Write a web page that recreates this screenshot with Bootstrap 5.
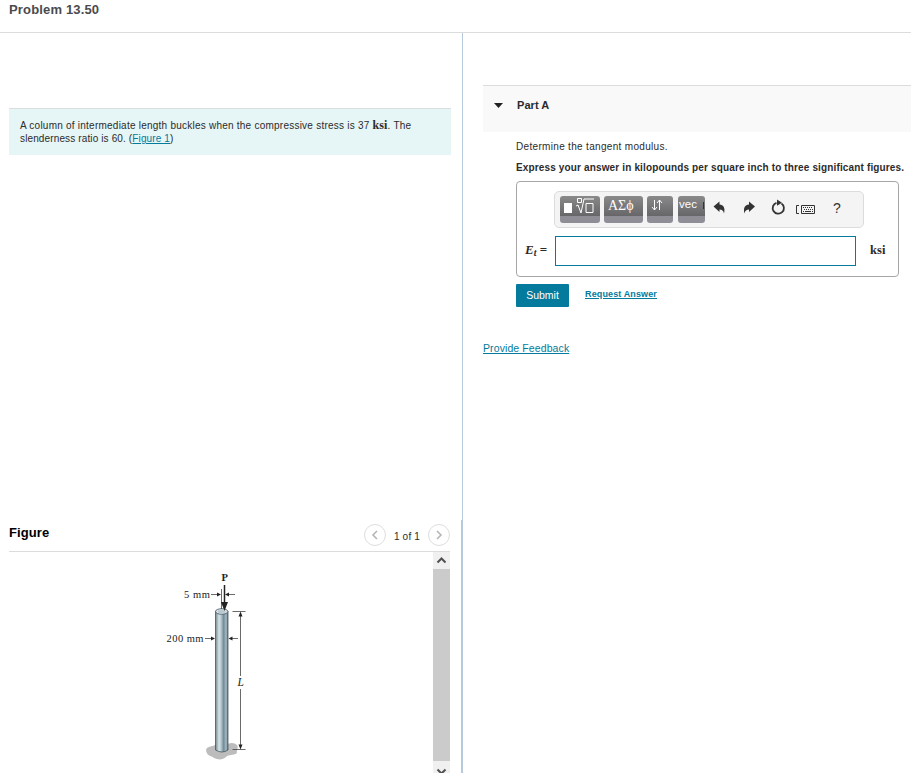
<!DOCTYPE html>
<html lang="en">
<head>
<meta charset="utf-8">
<meta name="viewport" content="width=device-width, initial-scale=1">
<title>Problem 13.50</title>
<link href="https://cdn.jsdelivr.net/npm/bootstrap@5.3.0/dist/css/bootstrap.min.css" rel="stylesheet">
<style>
body{font-family:"Liberation Sans",Arial,sans-serif;font-size:10px;line-height:13px;color:#2b2b2b;height:773px}
a{color:#047a9c}
.serif{font-family:"Liberation Serif","Times New Roman",serif}
.page-head{height:33px;padding:2px 9px;border-color:#dcdcdc!important}
.page-head h1{font-size:13px;line-height:15px;font-weight:700;color:#4a4a4f;letter-spacing:.16px}
.left-pane{width:463px}
.upper{height:487px;padding:75px 11px 0 9px;border-right:1px solid #b7c9dc}
.prompt{height:47px;background:#e6f5f6;border-top:1px solid #d9dddd;padding:10px 0 0 11px;letter-spacing:.235px;white-space:nowrap}
.prompt .line-two{letter-spacing:.13px}
.prompt .serif,.unit{font-size:12px;line-height:10px;letter-spacing:.1px}
.lower{padding-left:9px;border-right:2px solid #b7c9dc}
.fig-head{height:32px;width:441px;border-color:#dcdcdc!important;padding-bottom:1px}
.fig-head h2{font-size:13px;line-height:16px;color:#000;margin-bottom:5px;letter-spacing:.1px}
.pager{width:22px;height:22px;border:1px solid #dedede;background:#fff}
.page-no{font-size:10px;width:28px;margin:2px 7px 0;text-align:center;white-space:nowrap;letter-spacing:.2px}
.fig-body{width:441px}
.scrollbar{width:17px;background:#f0f0f0}
.thumb{height:192px;background:#cbcbcb}
.right-pane{padding:52px 0 0 20px}
.part-head{height:47px;background:#f9f9f9;border-top:1px solid #dcdcdc;padding:0 0 8px 11px;gap:14px}
.part-head h3{font-size:11px;line-height:14px;letter-spacing:.05px}
.part-body{padding:8px 0 0 33px}
.part-body p{white-space:nowrap}
.det{letter-spacing:.32px;margin-bottom:8px}
.exp{letter-spacing:.145px;margin-bottom:7px}
.answer{width:383px;height:96px;border:1px solid #a6a6a6;border-radius:4px;padding:9px 0 0 8px}
.tools{width:310px;height:37px;margin-left:29px;border:1px solid #dcdcdc;border-width:1.5px;border-radius:5px;background:#f4f4f4;padding:4px 0 0 5px}
.tool{height:27px;border-radius:3px;background:linear-gradient(#8a8a8b,#67676a 73%,#8f8e97 74%,#8f8e97);color:#fff;line-height:17px;overflow:hidden}
.greek{width:39px;font-size:14px;padding-left:4px;line-height:19px}
.vec{width:27px;margin-left:5px;font-size:11.5px;padding-left:1px}
.entry{margin-top:8px}
.entry-label{width:30px;font-size:13px;line-height:16px;padding-bottom:2px}
.entry input{width:301px;height:30px;border:1px solid #047a9c!important;border-radius:0;padding:0 6px}
.unit{margin:0 0 2px 14px;font-size:12.5px}
.submit{width:53px;height:23px;border-radius:1px;background:#047a9c;color:#fff;font-size:10.5px;padding:1px 0 0}
.req{font-size:9px;letter-spacing:.13px;margin:0 0 2px 16px}
.feedback{font-size:10.5px;margin-top:35px;letter-spacing:.1px}
.actions{margin-top:7px}
</style>
<script src="https://cdn.jsdelivr.net/npm/bootstrap@5.3.0/dist/js/bootstrap.bundle.min.js"></script>
</head>
<body class="bg-white d-flex flex-column overflow-hidden">
<header class="page-head border-bottom flex-shrink-0"><h1 class="m-0">Problem 13.50</h1></header>
<main class="d-flex flex-grow-1">
  <section class="left-pane d-flex flex-column flex-shrink-0">
    <div class="upper flex-shrink-0">
      <div class="prompt">A column of intermediate length buckles when the compressive stress is 37 <b class="serif">ksi</b>. The<br><span class="line-two">slenderness ratio is 60. (<a href="#figure">Figure 1</a>)</span></div>
    </div>
    <div class="lower flex-grow-1 d-flex flex-column" id="figure">
      <div class="fig-head border-bottom d-flex align-items-center flex-shrink-0">
        <h2 class="fw-bold me-auto">Figure</h2>
        <button class="pager rounded-circle p-0 d-flex align-items-center justify-content-center" aria-label="Previous"><svg width="8" height="10" viewBox="0 0 8 10" fill="none" stroke="#b5b5b5" stroke-width="1.6"><path d="M6 1 2 5l4 4"/></svg></button>
        <span class="page-no">1 of 1</span>
        <button class="pager rounded-circle p-0 d-flex align-items-center justify-content-center" aria-label="Next"><svg width="8" height="10" viewBox="0 0 8 10" fill="none" stroke="#b5b5b5" stroke-width="1.6"><path d="m2 1 4 4-4 4"/></svg></button>
      </div>
      <div class="fig-body d-flex flex-grow-1">
        <svg class="me-auto" width="424" height="221" viewBox="9 552 424 221">
          <defs>
            <linearGradient id="steel"><stop offset="0" stop-color="#71858f"/><stop offset=".28" stop-color="#d7e4e9"/><stop offset=".45" stop-color="#b3c6ce"/><stop offset=".65" stop-color="#718b98"/><stop offset=".85" stop-color="#a6bbc5"/><stop offset="1" stop-color="#566a75"/></linearGradient>
          </defs>
          <path d="M206 750c1-4 5-3 9-5 4-3 8-1 13-1 3-2 7-1 9 1 2 3-1 6 0 8-4 3-8 1-11 4-3 3-8 3-12 1-3-3-7-1-8-8z" fill="#bcbcbc"/>
          <path d="M215.500 611V750q6.500 4 12.500 0V611z" fill="url(#steel)" stroke="#46565f" stroke-width=".8"/>
          <ellipse cx="221.700" cy="611.500" rx="6.200" ry="2.800" fill="#d9e3e7" stroke="#52616a" stroke-width=".9"/>
          <ellipse cx="221.700" cy="611.500" rx="4" ry="1.500" fill="#b7c8d0"/>
          <g stroke="#444" stroke-width=".8" fill="none">
            <path d="M211 594.500h6M228 594.500h7M221.500 589v20M205 638.500h7M232 638.500h6M232.500 611.500h13M232.500 749.500h13M240.500 613v63M240.500 689v58"/>
          </g>
          <path d="M224.500 585v21" stroke="#222" stroke-width="1.500"/>
          <g fill="#222"><path d="M221 602h7l-3.500 9zM221 594.500l-4-2v4zM225 594.500l4-2v4zM215 638.500l-4-2v4zM228.500 638.500l4-2v4zM240.500 611.500l-2 5h4zM240.500 749.500l-2-5h4z"/></g>
          <g class="serif" font-size="10.500" fill="#222">
            <text x="221.500" y="581" font-weight="bold">P</text>
            <text x="184" y="598" textLength="26">5 mm</text>
            <text x="166.500" y="642" textLength="37">200 mm</text>
            <text x="237.500" y="686" font-size="11.500" font-style="italic">L</text>
          </g>
        </svg>
        <div class="scrollbar d-flex flex-column align-items-center">
          <svg width="17" height="17" fill="none" stroke="#505050" stroke-width="2"><path d="m4.500 10.500 4-4 4 4"/></svg>
          <div class="thumb w-100"></div>
          <svg width="17" height="12" fill="none" stroke="#505050" stroke-width="2"><path d="m4.500 8.500 4 4 4-4"/></svg>
        </div>
      </div>
    </div>
  </section>
  <section class="right-pane flex-grow-1">
    <div class="part-head d-flex align-items-center">
      <svg width="9" height="5"><path d="M0 0h9L4.500 5z" fill="#222"/></svg>
      <h3 class="fw-bold m-0">Part A</h3>
    </div>
    <div class="part-body">
      <p class="det">Determine the tangent modulus.</p>
      <p class="exp fw-bold">Express your answer in kilopounds per square inch to three significant figures.</p>
      <div class="answer">
        <div class="tools d-flex align-items-start">
          <svg class="tool" width="40" height="27"><path d="M4 7h8v10H4z" fill="#fff"/><path d="m16 10 2-1 3 8 3-14h10M17.500 2.500h4v4h-4zM26 7.500h7v9h-7z" fill="none" stroke="#fff"/></svg>
          <span class="tool greek serif ms-1">ΑΣϕ</span>
          <svg class="tool ms-1" width="26" height="27" fill="none" stroke="#fff"><path d="M7.500 4v10M5 11l2.500 3 2.500-3M12.500 14V4M10 7l2.500-3L15 7"/></svg>
          <span class="tool vec d-flex justify-content-between">vec<svg width="2" height="16"><path d="M.5 6v7" stroke="#333"/></svg></span>
          <svg width="150" height="27" viewBox="705 196 150 27" fill="none" stroke="#333">
            <path d="m713.500 206.500 6-5v3c4 .2 6 3.500 4.500 9-.6-3-2-4-4.500-4v2.500z" fill="#333" stroke="none"/>
            <path d="m755 206.500-6-5v3c-4 .2-6 3.500-4.500 9 .6-3 2-4 4.500-4v2.500z" fill="#333" stroke="none"/>
            <path d="M781.500 203.500a5.600 5.600 0 1 1-5-.7" stroke-width="1.800"/><path d="m777 199.500 5 3.300-5 3z" fill="#333" stroke="none"/>
            <path d="M799 205.500h-2.500v8h2.500M801.500 205.500h13v8h-13z"/>
            <path d="M803 207.500h10M804 209.500h9" stroke-dasharray="1 1"/><path d="M803 211.500h1m1 0h6m1 0h1"/>
            <text x="833" y="213" font-size="14" fill="#333" stroke="none">?</text>
          </svg>
        </div>
        <div class="entry d-flex align-items-center">
          <div class="entry-label serif"><i class="fw-bold">E<sub>t</sub></i> <b>=</b></div>
          <input type="text" class="form-control flex-shrink-0" aria-label="Answer">
          <b class="unit serif">ksi</b>
        </div>
      </div>
      <div class="actions d-flex align-items-center">
        <button class="btn submit">Submit</button><a href="#" class="req fw-bold">Request Answer</a>
      </div>
    </div>
    <div class="feedback"><a href="#">Provide Feedback</a></div>
  </section>
</main>
</body>
</html>
